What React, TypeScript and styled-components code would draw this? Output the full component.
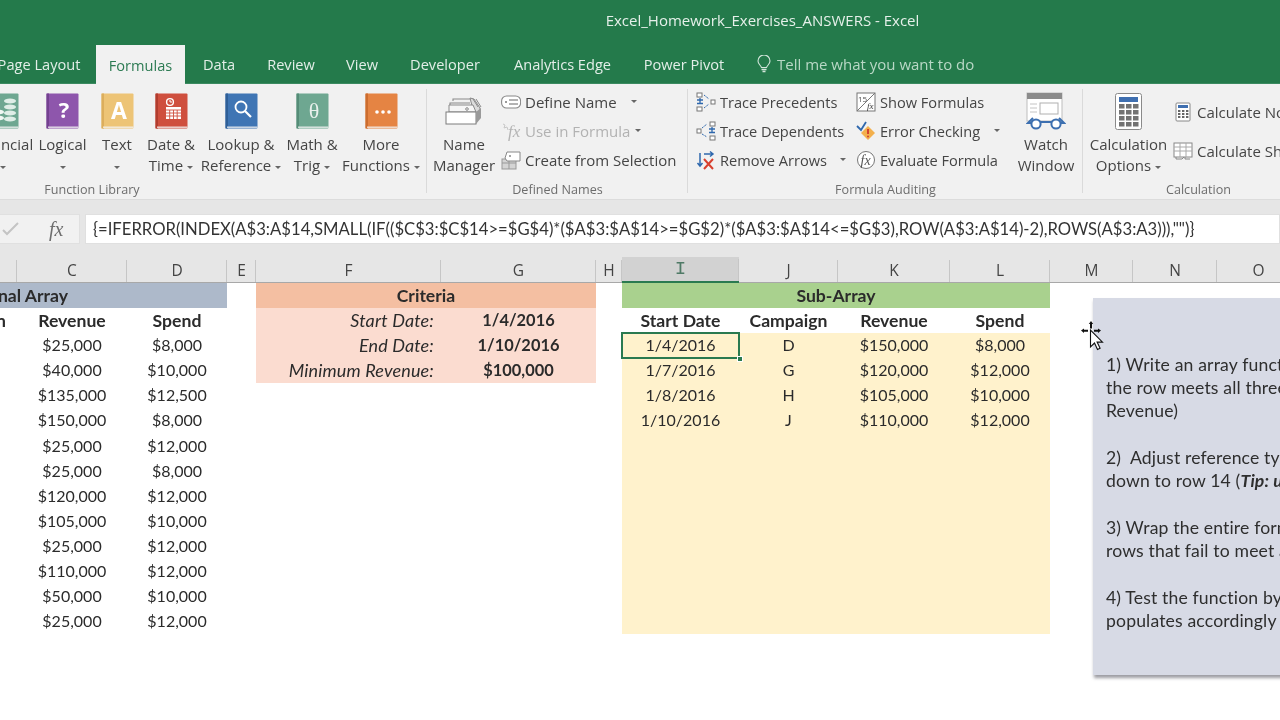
import React from "react";
import styled, { createGlobalStyle } from "styled-components";

const Global = createGlobalStyle`
  html, body { margin: 0; padding: 0; width: 1280px; height: 720px; overflow: hidden; background: #fff; }
  #root { width: 1280px; height: 720px; overflow: hidden; }
  * { box-sizing: border-box; }
`;

const Page = styled.div`
  width: 1280px; height: 720px; overflow: hidden; display: flex; flex-direction: column;
  font-family: "Open Sans", "Liberation Sans", sans-serif; filter: blur(0.35px); position: relative;
`;
const TitleBar = styled.div`
  height: 40px; flex: none; background: #247a4b; color: #e6f0ea; font-size: 15px;
  display: flex; align-items: center; justify-content: center; padding-left: 245px;
`;
const TabBar = styled.div`
  height: 44px; flex: none; background: #247a4b; display: flex; align-items: stretch; margin-left: -18px;
  font-size: 14.6px; color: #e3eee8; white-space: nowrap; border-bottom: 1px solid #3b8a60;
`;
const Tab = styled.div<{ $w: number; $active?: boolean }>`
  width: ${(p) => p.$w}px; flex: none; margin-top: 5px; display: flex; align-items: center; justify-content: center;
  background: ${(p) => (p.$active ? "#f1f1f1" : "transparent")};
  color: ${(p) => (p.$active ? "#2d7b53" : "inherit")};
  margin-bottom: ${(p) => (p.$active ? "-1px" : "0")};
`;
const TellMe = styled.div`
  display: flex; align-items: center; gap: 6px; color: #b9d8c6; margin-left: 19px; margin-top: 5px; font-size: 15px;
`;
const Ribbon = styled.div`
  height: 116px; flex: none; background: #f1f1f1; display: flex; margin-left: -243px; width: 1560px;
  border-bottom: 1px solid #dcdcdc; color: #454545; font-size: 15px;
`;
const Group = styled.div<{ $w: number; $sep?: boolean }>`
  width: ${(p) => p.$w}px; flex: none; display: flex; flex-direction: column; position: relative;
  &::after {
    content: ""; display: ${(p) => (p.$sep ? "block" : "none")}; position: absolute; right: 0; top: 5px; bottom: 6px;
    width: 1px; background: #dadada;
  }
`;
const GroupBody = styled.div<{ $pad?: number }>`
  height: 94px; display: flex; padding-left: ${(p) => p.$pad ?? 0}px;
`;
const GroupLabel = styled.div`
  height: 21px; font-size: 12.6px; color: #6d6d6d; text-align: center; line-height: 24px;
`;
const Big = styled.div<{ $w: number; $ml?: number }>`
  width: ${(p) => p.$w}px; margin-left: ${(p) => p.$ml ?? 0}px; flex: none; display: flex; flex-direction: column; align-items: center;
  padding-top: 9px; line-height: 21.5px; text-align: center; white-space: nowrap;
`;
const BigIcon = styled.div`
  height: 36px; margin-bottom: 4.6px; display: flex; align-items: center; justify-content: center;
`;
const Caret = styled.span<{ $ml?: number }>`
  display: inline-block; width: 0; height: 0; border-left: 3px solid transparent; border-right: 3px solid transparent;
  border-top: 3px solid #666; margin-left: ${(p) => p.$ml ?? 4}px; vertical-align: middle;
`;
const SmallCol = styled.div<{ $w: number; $ml?: number; $top?: number; $gap?: number; $size?: number }>`
  width: ${(p) => p.$w}px; margin-left: ${(p) => p.$ml ?? 0}px; flex: none; display: flex; flex-direction: column;
  padding-top: ${(p) => p.$top ?? 3}px; gap: ${(p) => p.$gap ?? 0}px; font-size: ${(p) => p.$size ?? 15}px;
`;
const SmallItem = styled.div<{ $off?: boolean }>`
  height: 29px; display: flex; align-items: center; gap: 3px; white-space: nowrap;
  color: ${(p) => (p.$off ? "#b2b2b2" : "inherit")};
`;
const SmallIcon = styled.span`
  width: 22px; height: 22px; flex: none; display: flex; align-items: center; justify-content: center;
`;
const FormulaBar = styled.div`
  height: 57px; flex: none; background: #e6e6e6; padding: 14px 0 13px; display: flex; gap: 5px;
`;
const FxBox = styled.div`
  width: 80px; background: #f1f1f1; display: flex; align-items: center; position: relative; padding-left: 2px; gap: 29px;
  border: 1px solid #e0e0e0; border-left: 0;
`;
const FxMark = styled.span`
  font-family: "Liberation Serif", serif; font-style: italic; font-size: 20px; color: #6e6e6e;
`;
const FormulaInput = styled.div`
  flex: 1; background: #fff; display: flex; align-items: center; padding-left: 7px; white-space: nowrap; overflow: hidden;
  font-family: Lato, sans-serif; font-size: 16.67px; color: #333; border: 1px solid #e0e0e0;
`;
const Sheet = styled.div`
  flex: 1; position: relative; background: #fff;
`;
const Grid = styled.div`
  margin-left: -200px; display: grid;
  grid-template-columns: 117px 100px 110px 100px 29px 185px 155px 26px 117px 99px 112px 100px 83px 84px 83px;
  grid-template-rows: 26px repeat(15, 25.08px);
  font-family: Lato, sans-serif; font-size: 16px; color: #2b2b2b;
`;
const Head = styled.div<{ $c: number; $sel?: boolean }>`
  grid-column: ${(p) => p.$c}; grid-row: 1; background: ${(p) => (p.$sel ? "#d2d2d2" : "#e6e6e6")};
  border-bottom: ${(p) => (p.$sel ? "2px solid #2a7a50" : "1px solid #a8a8a8")};
  font-family: ${(p) => (p.$sel ? '"Liberation Mono", monospace' : '"Open Sans", sans-serif')};
  font-size: ${(p) => (p.$sel ? "19px" : "15.5px")};
  color: ${(p) => (p.$sel ? "#4f7a66" : "#444")};
  display: flex; align-items: center; justify-content: center; position: relative;
  &::after { content: ""; position: absolute; right: 0; bottom: 0; height: 22px; width: 1px; background: #c6c6c6; }
`;
const Cell = styled.div<{ $c: number; $r: number; $span?: number; $bg?: string; $b?: boolean; $i?: boolean; $right?: boolean; $active?: boolean; $title?: boolean }>`
  grid-column: ${(p) => p.$c} / span ${(p) => p.$span ?? 1}; grid-row: ${(p) => p.$r};
  background: ${(p) => p.$bg ?? "transparent"};
  font-weight: ${(p) => (p.$b || p.$title ? 700 : 400)}; font-style: ${(p) => (p.$i ? "italic" : "normal")};
  font-size: ${(p) => (p.$title ? "17.6px" : p.$i ? "18px" : p.$b ? "16.4px" : "16px")};
  letter-spacing: ${(p) => (p.$i ? "0.15px" : "0")};
  display: flex; align-items: center; justify-content: ${(p) => (p.$right ? "flex-end" : "center")};
  padding-right: ${(p) => (p.$right ? "7px" : "0")}; padding-bottom: ${(p) => (p.$title ? "0" : "2px")}; white-space: nowrap; position: relative;
  ${(p) => (p.$active ? "box-shadow: inset 0 0 0 1px #2a7a50, 0 0 0 1px #2a7a50; z-index: 1;" : "")}
`;
const Handle = styled.span`
  position: absolute; right: -4px; bottom: -4px; width: 6px; height: 6px; background: #2a7a50; border: 1px solid #fff;
`;
const NoteShape = styled.div`
  position: absolute; left: 1093px; top: 41px; width: 260px; height: 377px; background: #d7dae5;
  box-shadow: 1px 3px 3px rgba(90, 90, 100, 0.6); padding: 54.5px 0 0 13px; white-space: nowrap;
  font-family: Lato, sans-serif; font-size: 17.6px; letter-spacing: 0.15px; line-height: 23.35px; color: #2e2e2e;
`;
const Blank = styled.div`height: 23.35px;`;
const Cursor = styled.div`
  position: absolute; left: 1081px; top: 64px; width: 24px; height: 32px;
`;

const Book = ({ c, d, children }: { c: string; d: string; children?: React.ReactNode }) => (
  <svg width="33" height="37" viewBox="0 0 33 37">
    <rect x="0.5" y="0.5" width="32" height="35" rx="1" fill={c} />
    <rect x="0.5" y="0.5" width="2.5" height="35" fill={d} />
    <rect x="2" y="33.5" width="30.5" height="1.4" fill="#f3f3f3" opacity="0.85" />
    {children}
  </svg>
);
const BookText = styled.text`
  font-family: "Open Sans", sans-serif; font-weight: 700; fill: #fff;
`;
const ThetaText = styled.text`
  font-family: "Liberation Serif", serif; fill: #e8f0ec;
`;

const FinancialIcon = () => (
  <Book c="#6ea791" d="#558c77">
    {[8, 14, 20, 26].map((y) => <ellipse key={y} cx="24" cy={y} rx="6" ry="2.5" fill="#dfeee7" />)}
    {[19, 25].map((y) => <ellipse key={y} cx="12" cy={y} rx="6" ry="2.5" fill="#f0f7f3" />)}
  </Book>
);
const LogicalIcon = () => (
  <Book c="#8e56ac" d="#744190"><BookText x="18" y="25" fontSize="22" textAnchor="middle">?</BookText></Book>
);
const TextIcon = () => (
  <Book c="#edc476" d="#dcae5c"><BookText x="18" y="26" fontSize="23" textAnchor="middle">A</BookText></Book>
);
const DateIcon = () => (
  <Book c="#cf4f3e" d="#b13d2e">
    <circle cx="15" cy="9" r="3.4" fill="none" stroke="#fff" strokeWidth="1.4" />
    <path d="M15 7v2h2" stroke="#fff" strokeWidth="1" fill="none" />
    <rect x="11" y="14" width="15" height="12" fill="#fff" />
    <path d="M11 17h15M11 20h15M11 23h15M14.7 17v9M18.5 17v9M22.2 17v9" stroke="#cf4f3e" strokeWidth="0.9" />
  </Book>
);
const LookupIcon = () => (
  <Book c="#3f75b4" d="#2f5f97">
    <circle cx="16" cy="14" r="5.5" fill="none" stroke="#fff" strokeWidth="1.8" />
    <path d="M20 18l6 6" stroke="#fff" strokeWidth="2.2" />
  </Book>
);
const MathIcon = () => (
  <Book c="#6ea791" d="#558c77"><ThetaText x="18" y="25" fontSize="22" textAnchor="middle">θ</ThetaText></Book>
);
const MoreIcon = () => (
  <Book c="#e58443" d="#cc6d2f">
    <circle cx="12" cy="19" r="1.8" fill="#fff" /><circle cx="18" cy="19" r="1.8" fill="#fff" /><circle cx="24" cy="19" r="1.8" fill="#fff" />
  </Book>
);
const NameManagerIcon = () => (
  <svg width="38" height="30" viewBox="0 0 38 30">
    <path d="M5 16V7h20M8 5V3h20" fill="none" stroke="#8a8a8a" strokeWidth="1.1" />
    <path d="M25 2l4 1 6 9v9l-4 4z" fill="#dcdcdc" stroke="#8a8a8a" />
    <path d="M28 3l5 8M31 3l5 8" stroke="#8a8a8a" />
    <path d="M4 9h24l3 7H4z" fill="#f6f6f6" stroke="#8a8a8a" />
    <circle cx="22" cy="13" r="1.3" fill="none" stroke="#8a8a8a" />
    <rect x="1" y="16" width="30" height="12" fill="#fff" stroke="#7c7c7c" />
    <path d="M31 16l5-4v10l-5 6z" fill="#9a9a9a" />
  </svg>
);
const WatchIcon = () => (
  <svg width="40" height="38" viewBox="0 0 40 38">
    <rect x="1" y="1" width="35" height="28" fill="#fff" stroke="#bdbdbd" />
    <rect x="1" y="1" width="35" height="6" fill="#8c8c8c" />
    <rect x="14" y="11" width="18" height="11" fill="#fff" stroke="#b0b0b0" />
    <path d="M4 12h7M4 16h7M4 20h7" stroke="#c4c4c4" />
    <circle cx="10" cy="32" r="4.6" fill="#fff" stroke="#3c6fb0" strokeWidth="2" />
    <circle cx="30" cy="32" r="4.6" fill="#fff" stroke="#3c6fb0" strokeWidth="2" />
    <path d="M14 30h12M5 31l-3 0 5-5M35 31l3 0-5-5" fill="none" stroke="#3c6fb0" strokeWidth="2" />
  </svg>
);
const CalcBigIcon = () => (
  <svg width="27" height="37" viewBox="0 0 27 37">
    <rect x="0.5" y="0.5" width="26" height="36" rx="2" fill="#fff" stroke="#8a8a8a" />
    <rect x="4" y="4" width="19" height="5" fill="#3f6fb0" />
    {[11, 17, 23, 29].map((y) =>
      [4, 11, 18].map((x) => <rect key={`${x}-${y}`} x={x} y={y} width="5.5" height="4.5" fill="#737373" />)
    )}
  </svg>
);
const Sv = ({ children }: { children: React.ReactNode }) => (
  <svg width="20" height="20" viewBox="0 0 20 20">{children}</svg>
);
const DefineIcon = () => (
  <Sv><rect x="0.6" y="4" width="19" height="12" rx="5" fill="#fff" stroke="#888" strokeWidth="1.1" /><path d="M8 8h9M8 12h9" stroke="#666" /><circle cx="5" cy="10" r="1" fill="#777" /></Sv>
);
const UseFxIcon = () => (
  <Sv><path d="M2 3l2 1-1 3 3-1 1 3" fill="none" stroke="#c8c8c8" /><text x="7" y="16" fontFamily="Liberation Serif, serif" fontStyle="italic" fontSize="17" fill="#b4b4b4">fx</text></Sv>
);
const CreateIcon = () => (
  <Sv><rect x="1" y="9" width="14" height="10" fill="#d4d4d4" stroke="#999" /><path d="M1 13h14M8 9v10" stroke="#999" /><path d="M6 2h13v9H6l-2-3z" fill="#fff" stroke="#888" /><circle cx="9" cy="6" r="1" fill="#888" /></Sv>
);
const TracePrecIcon = () => (
  <Sv><rect x="1" y="1" width="5" height="4" fill="#fff" stroke="#777" /><rect x="1" y="15" width="5" height="4" fill="#fff" stroke="#777" /><rect x="15" y="8" width="4" height="4" fill="#fff" stroke="#777" /><path d="M1 8h6M4 6v5M1 11.5h6" stroke="#2f68ad" strokeWidth="1.3" /><path d="M8 3l5 4M8 16l5-4" stroke="#2f68ad" strokeDasharray="2 1" /></Sv>
);
const TraceDepIcon = () => (
  <Sv><rect x="1" y="8" width="4" height="4" fill="#fff" stroke="#777" /><rect x="14" y="1" width="5" height="4" fill="#fff" stroke="#777" /><rect x="14" y="15" width="5" height="4" fill="#fff" stroke="#777" /><path d="M13 8h6M16 6v5M13 11.5h6" stroke="#2f68ad" strokeWidth="1.3" /><path d="M6 7l5-4M6 13l5 3" stroke="#2f68ad" strokeDasharray="2 1" /></Sv>
);
const RemoveIcon = () => (
  <Sv><path d="M4 3v13M1.5 13l2.5 3 2.5-3" fill="none" stroke="#2f68ad" strokeWidth="1.5" /><path d="M8 4h9M14 1.5L17 4l-3 2.5" fill="none" stroke="#2f68ad" strokeWidth="1.5" /><path d="M8 9l9 10M17 9L8 19" stroke="#d8402f" strokeWidth="2" /></Sv>
);
const ShowIcon = () => (
  <Sv><rect x="1" y="1" width="18" height="18" fill="#fff" stroke="#777" /><path d="M1 19L19 1" stroke="#777" /><text x="2" y="10" fontFamily="Open Sans, sans-serif" fontSize="8" fill="#555">15</text><text x="11" y="17" fontFamily="Liberation Serif, serif" fontStyle="italic" fontSize="9" fill="#333">fx</text></Sv>
);
const ErrorIcon = () => (
  <Sv><path d="M1 5l4 4 5-8" fill="none" stroke="#2f68ad" strokeWidth="1.8" /><path d="M12 5l7 7-7 7-7-7z" fill="#f3b04c" /><path d="M12 8v5" stroke="#d2432f" strokeWidth="2" /><circle cx="12" cy="15.5" r="1" fill="#d2432f" /></Sv>
);
const EvalIcon = () => (
  <Sv><circle cx="10" cy="10" r="8.5" fill="#fff" stroke="#777" /><text x="4.5" y="15" fontFamily="Liberation Serif, serif" fontStyle="italic" fontSize="14" fill="#555">fx</text></Sv>
);
const CalcNowIcon = () => (
  <Sv><rect x="3" y="1" width="14" height="18" rx="1" fill="#fff" stroke="#888" /><rect x="5" y="3" width="10" height="3" fill="#3f6fb0" />{[8, 11, 14].map((y) => [5, 9, 13].map((x) => <rect key={`${x}${y}`} x={x} y={y} width="2.4" height="2" fill="#666" />))}</Sv>
);
const CalcSheetIcon = () => (
  <Sv><rect x="1" y="2" width="18" height="14" fill="#fff" stroke="#888" /><path d="M1 6h18M1 10h18M7 2v14M13 2v14" stroke="#aaa" /><path d="M3 16v2h6l2-2M12 16v2h5" fill="none" stroke="#888" /></Sv>
);
const Check = () => (
  <svg width="18" height="14" viewBox="0 0 18 14"><path d="M1 8l4 4L16 1" fill="none" stroke="#c4c4c4" strokeWidth="2" /></svg>
);
const Bulb = () => (
  <svg width="14" height="18" viewBox="0 0 14 18"><path d="M4.5 12.5C3.5 10 1 9 1 6a6 6 0 0 1 12 0c0 3-2.5 4-3.5 6.5z" fill="none" stroke="#d3e6db" strokeWidth="1.1" /><path d="M4.5 14.5h5M5.5 16.5h3" stroke="#d3e6db" strokeWidth="1.3" /></svg>
);

const cols = ["A", "B", "C", "D", "E", "F", "G", "H", "I", "J", "K", "L", "M", "N", "O"];
const money = [
  ["$25,000", "$8,000"], ["$40,000", "$10,000"], ["$135,000", "$12,500"], ["$150,000", "$8,000"],
  ["$25,000", "$12,000"], ["$25,000", "$8,000"], ["$120,000", "$12,000"], ["$105,000", "$10,000"],
  ["$25,000", "$12,000"], ["$110,000", "$12,000"], ["$50,000", "$10,000"], ["$25,000", "$12,000"],
];
const sub = [
  ["1/4/2016", "D", "$150,000", "$8,000"], ["1/7/2016", "G", "$120,000", "$12,000"],
  ["1/8/2016", "H", "$105,000", "$10,000"], ["1/10/2016", "J", "$110,000", "$12,000"],
];
const criteria = [["Start Date:", "1/4/2016"], ["End Date:", "1/10/2016"], ["Minimum Revenue:", "$100,000"]];
const PINK = "#fbdcd0";
const YEL = "#fff2cc";
const formula = '{=IFERROR(INDEX(A$3:A$14,SMALL(IF(($C$3:$C$14>=$G$4)*($A$3:$A$14>=$G$2)*($A$3:$A$14<=$G$3),ROW(A$3:A$14)-2),ROWS(A$3:A3))),"")}';

export default function App() {
  return (
    <Page>
      <Global />
      <TitleBar>Excel_Homework_Exercises_ANSWERS - Excel</TitleBar>
      <TabBar>
        <Tab $w={114}>Page Layout</Tab>
        <Tab $w={89} $active>Formulas</Tab>
        <Tab $w={68}>Data</Tab>
        <Tab $w={76}>Review</Tab>
        <Tab $w={66}>View</Tab>
        <Tab $w={100}>Developer</Tab>
        <Tab $w={135}>Analytics Edge</Tab>
        <Tab $w={108}>Power Pivot</Tab>
        <TellMe><Bulb />Tell me what you want to do</TellMe>
      </TabBar>
      <Ribbon>
        <Group $w={670} $sep>
          <GroupBody $pad={215}>
            <Big $w={61}><BigIcon><FinancialIcon /></BigIcon>Financial<span><Caret $ml={0} /></span></Big>
            <Big $w={59}><BigIcon><LogicalIcon /></BigIcon>Logical<span><Caret $ml={0} /></span></Big>
            <Big $w={50}><BigIcon><TextIcon /></BigIcon>Text<span><Caret $ml={0} /></span></Big>
            <Big $w={58}><BigIcon><DateIcon /></BigIcon>Date &<span>Time<Caret /></span></Big>
            <Big $w={82}><BigIcon><LookupIcon /></BigIcon>Lookup &<span>Reference<Caret /></span></Big>
            <Big $w={60}><BigIcon><MathIcon /></BigIcon>Math &<span>Trig<Caret /></span></Big>
            <Big $w={78}><BigIcon><MoreIcon /></BigIcon>More<span>Functions<Caret /></span></Big>
          </GroupBody>
          <GroupLabel>Function Library</GroupLabel>
        </Group>
        <Group $w={261} $sep>
          <GroupBody $pad={6}>
            <Big $w={62}><BigIcon><NameManagerIcon /></BigIcon>Name<span>Manager</span></Big>
            <SmallCol $w={190} $ml={5}>
              <SmallItem><SmallIcon><DefineIcon /></SmallIcon>Define Name<Caret $ml={11} /></SmallItem>
              <SmallItem $off><SmallIcon><UseFxIcon /></SmallIcon>Use in Formula<Caret $ml={2} /></SmallItem>
              <SmallItem><SmallIcon><CreateIcon /></SmallIcon>Create from Selection</SmallItem>
            </SmallCol>
          </GroupBody>
          <GroupLabel>Defined Names</GroupLabel>
        </Group>
        <Group $w={395} $sep>
          <GroupBody $pad={7}>
            <SmallCol $w={160} $size={14.6}>
              <SmallItem><SmallIcon><TracePrecIcon /></SmallIcon>Trace Precedents</SmallItem>
              <SmallItem><SmallIcon><TraceDepIcon /></SmallIcon>Trace Dependents</SmallItem>
              <SmallItem><SmallIcon><RemoveIcon /></SmallIcon>Remove Arrows<Caret $ml={10} /></SmallItem>
            </SmallCol>
            <SmallCol $w={155} $size={14.6}>
              <SmallItem><SmallIcon><ShowIcon /></SmallIcon>Show Formulas</SmallItem>
              <SmallItem><SmallIcon><ErrorIcon /></SmallIcon>Error Checking<Caret $ml={11} /></SmallItem>
              <SmallItem><SmallIcon><EvalIcon /></SmallIcon>Evaluate Formula</SmallItem>
            </SmallCol>
            <Big $w={72}><BigIcon><WatchIcon /></BigIcon>Watch<span>Window</span></Big>
          </GroupBody>
          <GroupLabel>Formula Auditing</GroupLabel>
        </Group>
        <Group $w={231}>
          <GroupBody $pad={2}>
            <Big $w={87}><BigIcon><CalcBigIcon /></BigIcon>Calculation<span>Options<Caret /></span></Big>
            <SmallCol $w={142} $top={13} $gap={10}>
              <SmallItem><SmallIcon><CalcNowIcon /></SmallIcon>Calculate Now</SmallItem>
              <SmallItem><SmallIcon><CalcSheetIcon /></SmallIcon>Calculate Sheet</SmallItem>
            </SmallCol>
          </GroupBody>
          <GroupLabel>Calculation</GroupLabel>
        </Group>
      </Ribbon>
      <FormulaBar>
        <FxBox><Check /><FxMark>fx</FxMark></FxBox>
        <FormulaInput>{formula}</FormulaInput>
      </FormulaBar>
      <Sheet>
        <Grid>
          {cols.map((c, i) => <Head key={c} $c={i + 1} $sel={c === "I"}>{c}</Head>)}
          <Cell $c={1} $r={2} $span={4} $bg="#adb9ca" $title>Original Array</Cell>
          <Cell $c={6} $r={2} $span={2} $bg="#f4bfa2" $title>Criteria</Cell>
          <Cell $c={9} $r={2} $span={4} $bg="#a9d18e" $title>Sub-Array</Cell>
          <Cell $c={2} $r={3} $title>Campaign</Cell>
          <Cell $c={3} $r={3} $title>Revenue</Cell>
          <Cell $c={4} $r={3} $title>Spend</Cell>
          {money.map((m, i) => (
            <React.Fragment key={i}>
              <Cell $c={3} $r={i + 4}>{m[0]}</Cell>
              <Cell $c={4} $r={i + 4}>{m[1]}</Cell>
            </React.Fragment>
          ))}
          {criteria.map((m, i) => (
            <React.Fragment key={i}>
              <Cell $c={6} $r={i + 3} $bg={PINK} $i $right>{m[0]}</Cell>
              <Cell $c={7} $r={i + 3} $bg={PINK} $b>{m[1]}</Cell>
            </React.Fragment>
          ))}
          {["Start Date", "Campaign", "Revenue", "Spend"].map((t, i) => (
            <Cell key={t} $c={i + 9} $r={3} $title>{t}</Cell>
          ))}
          {money.map((_, r) =>
            [0, 1, 2, 3].map((c) => (
              <Cell key={`${r}-${c}`} $c={c + 9} $r={r + 4} $bg={YEL} $active={r === 0 && c === 0}>
                {sub[r]?.[c]}
                {r === 0 && c === 0 ? <Handle /> : null}
              </Cell>
            ))
          )}
        </Grid>
        <NoteShape>
          <div>1) Write an array function</div>
          <div>the row meets all three</div>
          <div>Revenue)</div>
          <Blank />
          <div>2)&nbsp; Adjust reference types</div>
          <div>down to row 14 (<b><i>Tip: use</i></b></div>
          <Blank />
          <div>3) Wrap the entire formula</div>
          <div>rows that fail to meet all</div>
          <Blank />
          <div>4) Test the function by</div>
          <div>populates accordingly</div>
        </NoteShape>
        <Cursor>
          <svg width="24" height="32" viewBox="0 0 24 32">
            <path d="M10 0l2.2 3H11v4.5h-2V3H7.8zM0 9.5L3 7.5v1.2h4v2H3v1.2zM20 9.5L17 7.5v1.2h-4v2h4v1.2z" fill="#111" />
            <path d="M9.5 9v17l4-4 3 6.5 2.6-1.2-3-6.2h5.4z" fill="#fff" stroke="#111" strokeWidth="1.1" />
          </svg>
        </Cursor>
      </Sheet>
    </Page>
  );
}
